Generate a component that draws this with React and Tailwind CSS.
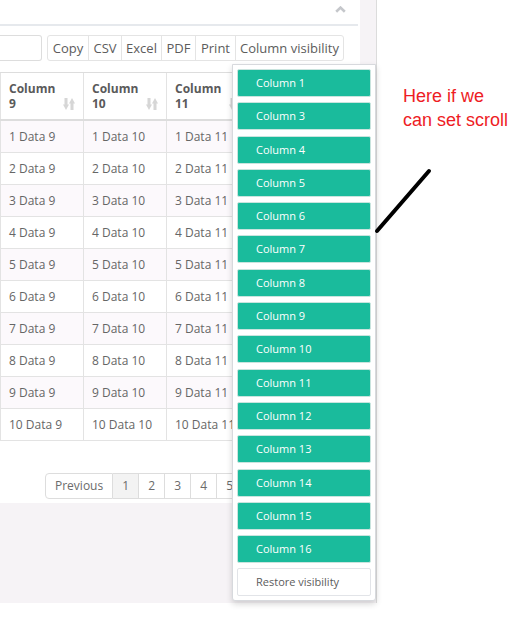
import React from 'react'

const cols = ['9', '10', '11', '12']
const rows = [1, 2, 3, 4, 5, 6, 7, 8, 9, 10]
const visibility = [1, 3, 4, 5, 6, 7, 8, 9, 10, 11, 12, 13, 14, 15, 16]
const toolbar = [
  { label: 'Copy', w: 'w-[40px]' },
  { label: 'CSV', w: 'w-[33px]' },
  { label: 'Excel', w: 'w-[40px]' },
  { label: 'PDF', w: 'w-[34px]' },
  { label: 'Print', w: 'w-[40px]' },
  { label: 'Column visibility', w: 'w-[108px]' },
]
const pages = ['1', '2', '3', '4', '5', '6']

function SortIcon() {
  return (
    <svg width="12" height="12" viewBox="0 0 12 12" className="absolute right-[8px] top-[25px]">
      <rect x="1.5" y="0" width="3" height="7" fill="#d6d6d6" />
      <polygon points="0,6.5 6,6.5 3,12" fill="#d6d6d6" />
      <rect x="7.5" y="5" width="3" height="7" fill="#d6d6d6" />
      <polygon points="6,5.5 12,5.5 9,0" fill="#d6d6d6" />
    </svg>
  )
}

export default function App() {
  return (
    <div className="relative w-[526px] h-[619px] bg-white overflow-hidden" style={{ fontFamily: '"Open Sans", "DejaVu Sans", sans-serif' }}>
      <div className="flex">
        {/* page background */}
        <div className="w-[377px] h-[603px] bg-[#f6f3f6] border-r border-[#dcdcdc]">
          <div className="w-[360px] h-[503px] bg-white overflow-hidden">
            {/* panel title */}
            <div className="h-[26px] flex justify-end pr-[12px] pt-[6px] border-b-2 border-[#e6e9ed] mr-[2px]">
              <svg width="11" height="7" viewBox="0 0 11 7">
                <polyline points="1.2,5.8 5.5,1.6 9.8,5.8" fill="none" stroke="#c5c7cb" strokeWidth="2.6" />
              </svg>
            </div>

            {/* toolbar */}
            <div className="flex mt-[9px] h-[26px] text-[13px] text-[#5c5c5c]">
              <div className="w-[42px] h-[26px] border border-l-0 border-[#dddddd] rounded-r-[3px]" />
              <div className="ml-[5px] flex border border-[#e4e4e4] rounded-[3px] bg-white">
                {toolbar.map((t, i) => (
                  <div key={t.label} className={`${t.w} shrink-0 text-center whitespace-nowrap leading-[24px] ${i > 0 ? 'border-l border-[#e4e4e4]' : ''}`}>
                    {t.label}
                  </div>
                ))}
              </div>
            </div>

            {/* table */}
            <div className="mt-[11px] w-[420px] text-[12px]">
              <div className="flex border-t border-b-2 border-[#dddddd]">
                {cols.map((c) => (
                  <div key={c} className="relative w-[83px] shrink-0 h-[46px] border-l border-[#e3e3e3] pl-[8px] pt-[8px] font-bold leading-[15px] text-[#5a5a5a]">
                    <div>Column</div>
                    <div>{c}</div>
                    <SortIcon />
                  </div>
                ))}
              </div>
              {rows.map((r) => (
                <div key={r} className={`flex h-[32px] border-b border-[#e3e3e3] ${r % 2 ? 'bg-[#fcf9fc]' : 'bg-white'}`}>
                  {cols.map((c) => (
                    <div key={c} className="w-[83px] shrink-0 border-l border-[#e3e3e3] pl-[8px] leading-[31px] text-[#666666] whitespace-nowrap">
                      {r} Data {c}
                    </div>
                  ))}
                </div>
              ))}
            </div>

            {/* pagination */}
            <div className="mt-[32px] ml-[45px] flex h-[26px] text-[12px] text-[#6b6b6b]">
              <div className="px-[9px] leading-[24px] border border-[#dddddd] rounded-l-[4px]">Previous</div>
              {pages.map((p, i) => (
                <div key={p} className={`w-[26px] shrink-0 text-center leading-[24px] border border-l-0 border-[#dddddd] ${i === 0 ? 'bg-[#f3f3f3]' : 'bg-white'}`}>
                  {p}
                </div>
              ))}
            </div>
          </div>
        </div>

        {/* annotation */}
        <div className="pl-[26px] pt-[84px] text-[18px] leading-[24px] text-[#ee1c24]" style={{ fontFamily: '"Liberation Sans", Arial, sans-serif' }}>
          <div>Here if we</div>
          <div>can set scroll</div>
        </div>
      </div>

      {/* column visibility dropdown */}
      <div className="absolute left-[232px] top-[64px] w-[144px] p-[4px] bg-white border border-[#d7d9dd] rounded-b-[3px] shadow-[0_3px_6px_rgba(0,0,0,0.16)] flex flex-col gap-[5.3px]">
        {visibility.map((n) => (
          <div key={n} className="h-[28px] pl-[18px] leading-[26px] text-[11px] text-white bg-[#1abb9c] border border-[#c9e4de] rounded-[2px]">
            Column {n}
          </div>
        ))}
        <div className="h-[28px] pl-[18px] leading-[26px] text-[11px] text-[#5c5c5c] bg-white border border-[#e2e4e8] rounded-[2px]">
          Restore visibility
        </div>
      </div>

      {/* hand-drawn line */}
      <svg className="absolute left-[370px] top-[164px]" width="66" height="76" viewBox="0 0 66 76">
        <line x1="7" y1="67" x2="59" y2="7" stroke="#000" strokeWidth="4" strokeLinecap="round" />
      </svg>
    </div>
  )
}
